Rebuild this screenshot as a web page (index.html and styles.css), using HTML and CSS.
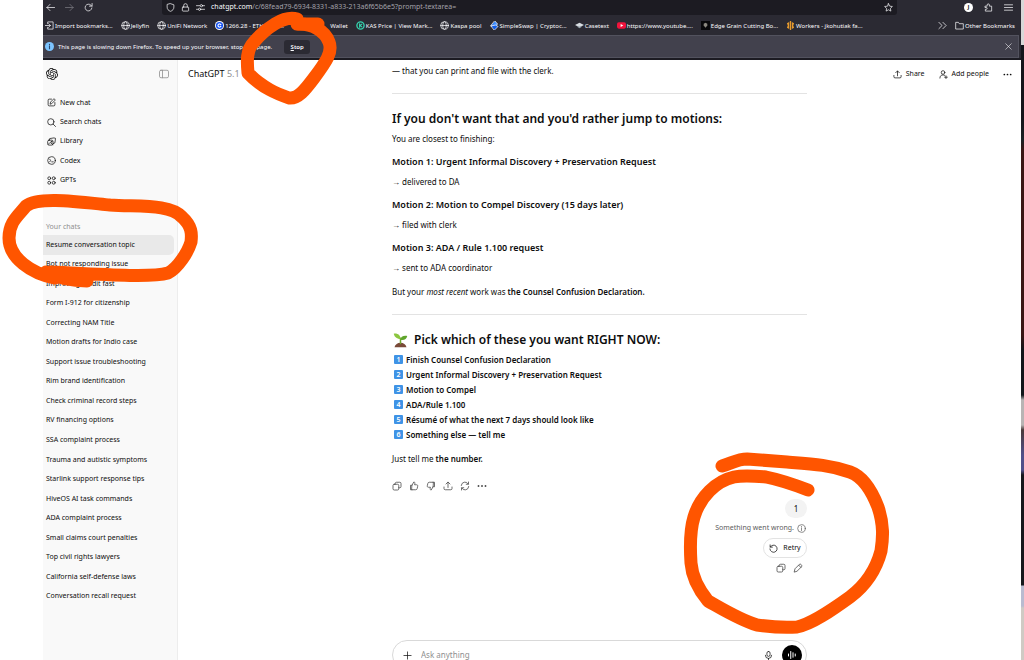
FILE: index.html
```html
<!DOCTYPE html>
<html lang="en">
<head>
<meta charset="utf-8">
<title>ChatGPT</title>
<link rel="stylesheet" href="styles.css">
</head>
<body>
<svg class="defs" aria-hidden="true">
  <symbol id="globe" viewBox="0 0 20 20"><circle cx="10" cy="10" r="8.5"/><ellipse cx="10" cy="10" rx="4" ry="8.5"/><path d="M1.5 10h17"/></symbol>
  <symbol id="copy" viewBox="0 0 20 20"><rect x="2" y="6.500" width="11.500" height="11.500" rx="2.500"/><path d="M6.500 6.500V5A2.500 2.500 0 0 1 9 2.500h6.500A2.500 2.500 0 0 1 18 5v6a2.500 2.500 0 0 1-2.500 2.500h-2"/></symbol>
  <symbol id="share" viewBox="0 0 20 20"><path d="M10 13V2.500M6 6l4-4 4 4M2 12v3a2.500 2.500 0 0 0 2.500 2.500h11a2.500 2.500 0 0 0 2.500-2.500v-3"/></symbol>
  <symbol id="dots" viewBox="0 0 20 20"><g fill="currentColor" stroke="none"><circle cx="3" cy="10" r="1.900"/><circle cx="10" cy="10" r="1.900"/><circle cx="17" cy="10" r="1.900"/></g></symbol>
  <symbol id="thumb" viewBox="0 0 20 20"><path d="M6 8.500 9.500 2c1.800 0 2.600 1.200 2.200 3l-.6 2.500H15c2 0 2.800 1.200 2.400 3l-1 4.500c-.4 1.700-1.400 2.500-3 2.500H6zM6 8.500H3v9h3"/></symbol>
</svg>
<div class="desktop">
  <div class="window">
    <header class="chrome">
      <div class="urlbar">
        <div class="nav">
          <button class="ib" aria-label="Back"><svg viewBox="0 0 20 20"><path d="M19 10H2M9 3l-7 7 7 7"/></svg></button>
          <button class="ib dim" aria-label="Forward"><svg viewBox="0 0 20 20"><path d="M1 10h17M11 3l7 7-7 7"/></svg></button>
          <button class="ib" aria-label="Reload"><svg viewBox="0 0 20 20"><path d="M17.500 11a7.500 7.500 0 1 1-2-6l2 2M18 1v6h-6"/></svg></button>
        </div>
        <div class="address">
          <svg class="i" viewBox="0 0 20 20"><path d="M10 1.500 17.500 4v5c0 5-3 8-7.500 9.500C5.500 17 2.500 14 2.500 9V4z"/></svg>
          <svg class="i" viewBox="0 0 20 20"><rect x="3" y="9" width="14" height="9" rx="1.500"/><path d="M6 9V5.500a4 4 0 0 1 8 0V9"/></svg>
          <svg class="i" viewBox="0 0 20 20"><path d="M1 6h7M15 6h4M1 14h4M12 14h7"/><circle cx="12" cy="6" r="2.500"/><circle cx="8" cy="14" r="2.500"/></svg>
          <span class="url"><b>chatgpt.com</b>/c/68fead79-6934-8331-a833-213a6f65b6e5?prompt-textarea=</span>
          <svg class="i star" viewBox="0 0 20 20"><path d="m10 1.500 2.600 5.500 6 .8-4.400 4.200 1.100 6-5.300-3-5.300 3 1.100-6L1.400 7.800l6-.8z"/></svg>
        </div>
        <div class="tools">
          <span class="avatar">J</span>
          <svg class="i" viewBox="0 0 20 20"><path d="M3 7h4V4.500a2.500 2.500 0 0 1 5 0V7h5v11H3v-4h2a2 2 0 0 0 0-4H3z"/></svg>
          <svg class="i" viewBox="0 0 20 20"><path d="M1 4h18M1 10h18M1 16h18"/></svg>
        </div>
      </div>
      <nav class="bookmarks">
        <a href="#"><svg class="i" viewBox="0 0 20 20"><path d="M6 6V2h12v16H6v-4M0 10h12M8 6l4 4-4 4"/></svg>Import bookmarks...</a>
        <a href="#"><svg class="i"><use href="#globe"/></svg>Jellyfin</a>
        <a href="#"><svg class="i"><use href="#globe"/></svg>UniFi Network</a>
        <a href="#" class="b-eth"><svg class="i" viewBox="0 0 20 20"><circle cx="10" cy="10" r="10" fill="#fff" stroke="none"/><circle cx="10" cy="10" r="8" fill="#1652f0" stroke="none"/><path d="M13 8a3.500 3.500 0 1 0 0 4" stroke="#fff" stroke-width="2.500"/></svg>1266.28 - ETH-USD ...</a>
        <a href="#">Wallet</a>
        <a href="#"><svg class="i" viewBox="0 0 20 20"><circle cx="10" cy="10" r="8" stroke="#35d3ae" stroke-width="3"/><path d="M8 6v8M13 7l-4 3 4 3" stroke="#35d3ae" stroke-width="2.500"/></svg>KAS Price | View Mark...</a>
        <a href="#"><svg class="i"><use href="#globe"/></svg>Kaspa pool</a>
        <a href="#"><svg class="i" viewBox="0 0 20 20" stroke="none"><path d="M11 0l6 7-7 5-8-1z" fill="#3c8cff"/><path d="M3 11l9-2 6 3-8 8z" fill="#0d5be8"/></svg>SimpleSwap | Cryptoc...</a>
        <a href="#"><svg class="i" viewBox="0 0 20 20"><path d="M0 9l10-5 10 5-10 5z" fill="#d8dde2" stroke="none"/><path d="M4 12l6 4 6-4z" fill="#9aa6b0" stroke="none"/></svg>Casetext</a>
        <a href="#"><svg class="i" viewBox="0 0 20 20"><rect y="3" width="20" height="14" rx="4" fill="#f1133c" stroke="none"/><path d="M8 6.500v7l6-3.500z" fill="#fff" stroke="none"/></svg>https://www.youtube....</a>
        <a href="#"><svg class="i" viewBox="0 0 20 20"><path d="M0 0h20v20H0z" fill="#08080a" stroke="none"/><path d="M6 6l4-2 4 2v4l-4 5-4-5z" fill="#8a877f" stroke="none"/></svg>Edge Grain Cutting Bo...</a>
        <a href="#"><svg class="i" viewBox="0 0 20 20"><path d="M7 2v16l-5-3 2-5-2-5zM8.500 0h3v20h-3zM13 2l5 3-2 5 2 5-5 3z" fill="#e69a2e" stroke="none"/></svg>Workers - jkohutiak fa...</a>
        <button class="ib more" aria-label="More bookmarks"><svg viewBox="0 0 20 20"><path d="M2 3l7 7-7 7M11 3l7 7-7 7"/></svg></button>
        <a href="#"><svg class="i" viewBox="0 0 20 20"><path d="M1.500 17V3h6l2 3h9v11z"/></svg>Other Bookmarks</a>
      </nav>
      <div class="notice" role="alert">
        <svg class="i info" viewBox="0 0 20 20"><circle cx="10" cy="10" r="10" fill="#7cc4ff" stroke="none"/><path d="M10 9v6M10 5v1" stroke="#2b4a70" stroke-width="2.500"/></svg>
        <span>This page is slowing down Firefox. To speed up your browser, stop this page.</span>
        <button class="stop"><u>S</u>top</button>
        <button class="ib close" aria-label="Close"><svg viewBox="0 0 20 20"><path d="M2 2l16 16M18 2 2 18"/></svg></button>
      </div>
    </header>
    <div class="app">
      <aside class="sidebar">
        <div class="side-head">
          <svg class="logo" viewBox="0 0 24 24"><path d="M22.280 9.820a5.980 5.980 0 0 0-.520-4.910 6.050 6.050 0 0 0-6.510-2.900A6.070 6.070 0 0 0 4.980 4.180a5.980 5.980 0 0 0-4 2.900 6.050 6.050 0 0 0 .740 7.100 5.980 5.980 0 0 0 .510 4.910 6.050 6.050 0 0 0 6.510 2.900A5.980 5.980 0 0 0 13.260 24a6.060 6.060 0 0 0 5.770-4.210 5.990 5.990 0 0 0 4-2.900 6.060 6.060 0 0 0-.750-7.070zm-9.020 12.610a4.480 4.480 0 0 1-2.880-1.040l4.920-2.840a.8.8 0 0 0 .390-.680v-6.740l2.020 1.170v5.620a4.500 4.500 0 0 1-4.450 4.510zM3.600 18.300a4.470 4.470 0 0 1-.530-3.010l4.920 2.850a.77.77 0 0 0 .780 0l5.840-3.370v2.330L9.740 19.950a4.500 4.500 0 0 1-6.140-1.650zM2.340 7.900a4.480 4.480 0 0 1 2.370-1.980v5.680a.77.77 0 0 0 .390.680l5.810 3.350-2.020 1.170-4.830-2.790A4.500 4.500 0 0 1 2.340 7.870zm16.600 3.850-5.840-3.380 2.020-1.160 4.830 2.790a4.490 4.490 0 0 1-.680 8.100v-5.680a.79.79 0 0 0-.330-.670zm2.010-3.020-4.910-2.880a.78.78 0 0 0-.790 0L9.410 9.230V6.900l4.900-2.830a4.500 4.500 0 0 1 6.640 4.660zM8.310 12.860l-2.020-1.160V6.070a4.500 4.500 0 0 1 7.380-3.450L8.840 5.460a.8.8 0 0 0-.390.680zm1.100-2.360 2.600-1.500 2.600 1.500v3l-2.600 1.500-2.600-1.500z"/></svg>
          <button class="ib toggle" aria-label="Close sidebar"><svg viewBox="0 0 20 20"><rect x="1" y="2.500" width="18" height="15" rx="3"/><path d="M7 2.500v15"/></svg></button>
        </div>
        <nav class="menu">
          <a href="#"><svg class="i" viewBox="0 0 20 20"><path d="M10 2.500H5A2.500 2.500 0 0 0 2.500 5v10A2.500 2.500 0 0 0 5 17.500h10a2.500 2.500 0 0 0 2.500-2.500v-5M7 13l1-4 7.500-7.500 3 3L11 12z"/></svg>New chat</a>
          <a href="#"><svg class="i" viewBox="0 0 20 20"><circle cx="8.500" cy="8.500" r="7"/><path d="m13.500 13.500 5.500 5.500"/></svg>Search chats</a>
          <a href="#"><svg class="i" viewBox="0 0 20 20"><rect x="1.500" y="7" width="12" height="11" rx="3"/><path d="M5 7l1-3.500L15.500 2l3.500 1-1.500 10-4 2M3 16l4-4 6 5"/><circle cx="10" cy="10.500" r="1"/></svg>Library</a>
          <a href="#"><svg class="i" viewBox="0 0 20 20"><circle cx="10" cy="10" r="8.500"/><path d="m6 7 2 3-2 3M10.500 13H14"/></svg>Codex</a>
          <a href="#"><svg class="i" viewBox="0 0 20 20"><circle cx="5" cy="5" r="3.200"/><circle cx="15" cy="5" r="3.200"/><circle cx="5" cy="15" r="3.200"/><circle cx="15" cy="15" r="3.200"/></svg>GPTs</a>
        </nav>
        <h2 class="side-title">Your chats</h2>
        <nav class="chats">
          <a href="#" class="active">Resume conversation topic</a>
          <a href="#">Bot not responding issue</a>
          <a href="#">Improving credit fast</a>
          <a href="#">Form I-912 for citizenship</a>
          <a href="#">Correcting NAM Title</a>
          <a href="#">Motion drafts for Indio case</a>
          <a href="#">Support issue troubleshooting</a>
          <a href="#">Rim brand identification</a>
          <a href="#">Check criminal record steps</a>
          <a href="#">RV financing options</a>
          <a href="#">SSA complaint process</a>
          <a href="#">Trauma and autistic symptoms</a>
          <a href="#">Starlink support response tips</a>
          <a href="#">HiveOS AI task commands</a>
          <a href="#">ADA complaint process</a>
          <a href="#">Small claims court penalties</a>
          <a href="#">Top civil rights lawyers</a>
          <a href="#">California self-defense laws</a>
          <a href="#">Conversation recall request</a>
        </nav>
      </aside>
      <main class="main">
        <div class="topbar">
          <button class="model">ChatGPT <span>5.1</span></button>
          <div class="top-actions">
            <button><svg class="i"><use href="#share"/></svg>Share</button>
            <button><svg class="i" viewBox="0 0 20 20"><circle cx="9" cy="5.500" r="4"/><path d="M2 18c0-5 3-7 7-7 1.500 0 3 .3 4 1M15.500 13v6M12.500 16h6"/></svg>Add people</button>
            <button aria-label="More"><svg class="i"><use href="#dots"/></svg></button>
          </div>
        </div>
        <div class="thread">
          <article class="answer">
            <p>— that you can print and file with the clerk.</p>
            <hr>
            <h2>If you don't want that and you'd rather jump to motions:</h2>
            <p class="lead">You are closest to finishing:</p>
            <h3>Motion 1: Urgent Informal Discovery + Preservation Request</h3>
            <p>→ delivered to DA</p>
            <h3>Motion 2: Motion to Compel Discovery (15 days later)</h3>
            <p>→ filed with clerk</p>
            <h3>Motion 3: ADA / Rule 1.100 request</h3>
            <p>→ sent to ADA coordinator</p>
            <p class="note">But your <em>most recent</em> work was <strong>the Counsel Confusion Declaration.</strong></p>
            <hr>
            <h2 class="pick"><svg class="seedling" viewBox="0 0 20 20"><path d="M2 19c1-4 4-6 8-6s7 2 8 6z" fill="#7a4a38"/><path d="M10 14V7" stroke="#6fa92f" stroke-width="2"/><path d="M10 8C6 8 2 6 1 1c5-1 9 2 9 7z" fill="#8cc63f"/><path d="M10 9c0-4 4-6 9-5-1 4-4 6-9 5z" fill="#5fa52c"/></svg>Pick which of these you want RIGHT NOW:</h2>
            <ul class="options">
              <li><span class="key">1</span>Finish Counsel Confusion Declaration</li>
              <li><span class="key">2</span>Urgent Informal Discovery + Preservation Request</li>
              <li><span class="key">3</span>Motion to Compel</li>
              <li><span class="key">4</span>ADA/Rule 1.100</li>
              <li><span class="key">5</span>Résumé of what the next 7 days should look like</li>
              <li><span class="key">6</span>Something else — tell me</li>
            </ul>
            <p>Just tell me <strong>the number.</strong></p>
            <div class="actions">
              <button class="ib" aria-label="Copy"><svg><use href="#copy"/></svg></button>
              <button class="ib" aria-label="Good response"><svg><use href="#thumb"/></svg></button>
              <button class="ib flip" aria-label="Bad response"><svg><use href="#thumb"/></svg></button>
              <button class="ib" aria-label="Share"><svg><use href="#share"/></svg></button>
              <button class="ib" aria-label="Regenerate"><svg viewBox="0 0 20 20"><path d="M2.500 9A7.500 7.500 0 0 1 16.500 6M17 2v4.500h-4.500M17.500 11a7.500 7.500 0 0 1-14 3M3 18v-4.500h4.500"/></svg></button>
              <button class="ib" aria-label="More actions"><svg><use href="#dots"/></svg></button>
            </div>
          </article>
          <section class="prompt">
            <div class="bubble">1</div>
            <div class="error">Something went wrong. <svg class="i" viewBox="0 0 20 20"><circle cx="10" cy="10" r="8.500"/><path d="M10 9v5.500M10 5.500v1"/></svg></div>
            <button class="retry"><svg class="i" viewBox="0 0 20 20"><path d="M3 6.500A8 8 0 1 1 2 11M2.500 2v5h5"/></svg>Retry</button>
            <div class="prompt-actions">
              <button class="ib" aria-label="Copy message"><svg><use href="#copy"/></svg></button>
              <button class="ib" aria-label="Edit message"><svg viewBox="0 0 20 20"><path d="m2.500 17.500 1.500-6 9-9c2-1.500 5.500 2 4.500 4.500l-9 9zM11.500 4.500l4.500 4.500"/></svg></button>
            </div>
          </section>
          <form class="composer">
            <button type="button" class="ib" aria-label="Add"><svg viewBox="0 0 20 20"><path d="M10 2v16M2 10h16"/></svg></button>
            <input type="text" placeholder="Ask anything" aria-label="Ask anything">
            <button type="button" class="ib" aria-label="Dictate"><svg viewBox="0 0 20 20"><rect x="6.500" y="1" width="7" height="11" rx="3.500"/><path d="M3 9.500a7 7 0 0 0 14 0M10 16.500V20"/></svg></button>
            <button type="button" class="voice" aria-label="Voice mode"><svg viewBox="0 0 20 20"><path d="M3 8v4M7.500 3v14M12 5.500v9M16.500 8v4"/></svg></button>
          </form>
        </div>
      </main>
    </div>
  </div>
  <div class="behind"></div>
</div>
<svg class="ink" viewBox="0 0 1024 660" aria-hidden="true">
  <path d="M297 19C284 15 266 28 254 42C246 50 247 62 248 73C262 88 278 94 289 98C298 99 305 90 314 78C326 62 333 52 329 42C325 31 312 23 297 24Z"/>
  <path d="M298 24h20"/>
  <path d="M46 272C60 279 75 281 87 281M55 278C32 274 9 258 9 238C9 222 18 216 26 206C38 196 80 202 110 205C140 207 170 204 182 217C192 226 192 234 191 242C188 252 178 268 168 273C150 278 100 274 50 272"/>
  <path d="M722 466C732 463 738 459 747 459L787 462C812 464 830 465 850 472C864 477 873 494 878 507C884 525 883 538 881 551C876 570 866 585 850 597C832 610 812 624 797 627C783 628 771 627 757 625C740 620 724 610 708 601C699 590 692 576 691 563C690 548 690 530 694 517C700 497 716 481 734 477C744 475 754 476 766 477C781 480 795 485 808 490"/>
</svg>
</body>
</html>
```
FILE: styles.css
```css
* { box-sizing: border-box; }
body {
  margin: 0;
  background: #fff;
  color: #0d0d0d;
  font: 7px/12px "Noto Sans", "Open Sans", sans-serif;
  overflow: hidden;
}
svg { fill: none; stroke: currentColor; stroke-width: 1.6; stroke-linecap: round; stroke-linejoin: round; }
.defs { position: absolute; width: 0; height: 0; }
button, input { font: inherit; color: inherit; background: none; border: 0; padding: 0; }
a { color: inherit; text-decoration: none; white-space: nowrap; }
h2, h3, p, ul { margin: 0; padding: 0; }
.i, .ib svg { width: 9px; height: 9px; flex: none; display: block; }
.ib { display: flex; flex: none; }

.desktop { display: grid; grid-template-columns: 43px minmax(0, 1fr) 3px; height: 100vh; }
.window { grid-column: 2; display: flex; flex-direction: column; min-height: 0; }
.behind {
  background: linear-gradient(#d8d8d8 0 45px, #14161b 45px 120px, #1a2124 140px, #3a1614 150px 335px, #11161a 350px 395px, #b8b4b4 400px 425px, #4a3a3a 430px, #50508a 455px 470px, #15181c 475px 585px, #b9bbd0 586px 606px, #cfcac4 608px);
}

.chrome { background: #2b2a33; color: #fbfbfe; font-size: 6px; border-bottom: 2px solid #1c1b22; }
.urlbar { display: flex; align-items: center; height: 16px; padding: 0 8px 2px 3px; }
.nav { display: flex; gap: 10px; width: 116px; }
.dim { opacity: .4; }
.address { flex: 1; display: flex; align-items: center; gap: 6px; height: 15px; padding: 0 4px; background: #1c1b22; border-radius: 0 0 3px 3px; }
.url { font-size: 7px; color: #a3a2aa; }
.url b { color: #fbfbfe; font-weight: 400; }
.star { margin-left: auto; }
.tools { display: flex; align-items: center; gap: 11px; margin-left: 67px; }
.avatar { width: 9px; height: 9px; border-radius: 50%; background: #fff; color: #222; font-weight: 700; line-height: 9px; text-align: center; }
.bookmarks { display: flex; align-items: center; gap: 8px; height: 19px; padding: 0 6px 0 2px; }
.bookmarks a { display: flex; align-items: center; gap: 1px; }
.b-eth { width: 107px; }
.more { margin-left: auto; }
.notice { display: flex; align-items: center; height: 23px; padding: 0 6px 0 2px; margin-right: 2px; background: #42414d; border: 1px solid #52525e; border-left: 0; }
.info { margin-right: 4px; }
.stop { margin-left: 12px; width: 26px; height: 14px; border-radius: 3px; background: #2b2a33; font-weight: 600; }
.close { margin-left: auto; }
.close svg { width: 7px; height: 7px; }

.app { flex: 1; display: flex; min-height: 0; }
.sidebar { width: 135px; flex: none; display: flex; flex-direction: column; background: #f9f9f9; border-right: 1px solid #ededed; padding-bottom: 54px; }
.side-head { display: flex; justify-content: space-between; align-items: center; height: 28px; padding: 0 8px 0 3px; margin-bottom: 5px; }
.logo { width: 12px; height: 12px; stroke: none; fill: currentColor; }
.toggle { color: #8f8f8f; }
.toggle svg { width: 10px; height: 10px; }
.menu { display: grid; grid-template-rows: repeat(5, 1fr); height: 97px; margin-bottom: 29px; }
.menu a { display: flex; align-items: center; gap: 4px; padding-left: 4px; }
.side-title { font-size: 7px; font-weight: 400; line-height: 16px; color: #8f8f8f; padding-left: 3px; }
.chats { flex: 1; display: grid; grid-auto-rows: 1fr; margin-right: 3px; }
.chats a { display: flex; align-items: center; padding-left: 3px; }
.active { background: #e9e9e9; border-radius: 0 5px 5px 0; }

.main { flex: 1; min-width: 0; position: relative; }
.topbar { position: absolute; inset: 0 0 auto 0; display: flex; justify-content: space-between; align-items: center; height: 28px; padding: 0 9px 0 10px; }
.model { font-size: 9px; }
.model span { color: #8f8f8f; }
.top-actions { display: flex; gap: 14px; }
.top-actions button { display: flex; align-items: center; gap: 4px; }
.thread { max-width: 415px; margin: 0 auto; padding-top: 3px; }
.answer { font-size: 8px; line-height: 16px; }
.answer hr { border: 0; border-top: 1px solid #e3e3e3; margin: 14px 0; }
.answer h2 { font-size: 12px; line-height: 22px; font-weight: 600; }
.answer h3 { font-size: 9px; line-height: 16px; font-weight: 600; margin: 7px 0 4px; }
.answer strong { font-weight: 600; }
.answer .lead { margin-top: 1px; }
.answer .note { margin-top: 8px; }
.pick { display: flex; align-items: center; }
.seedling { width: 15px; height: 15px; margin: 0 6px 0 1px; stroke: none; }
.options { list-style: none; font-weight: 600; line-height: 15px; margin: 1px 0 9px; }
.options li { display: flex; align-items: center; }
.key { width: 9px; height: 9px; margin: 0 3px 0 2px; border-radius: 1px; background: #3f93e6; color: #fff; font-size: 7px; line-height: 9px; text-align: center; }
.actions { display: flex; gap: 7px; margin-top: 14px; color: #4a4a4a; }
.actions svg, .prompt-actions svg { width: 10px; height: 10px; }
.flip { transform: rotate(180deg); }
.prompt { display: flex; flex-direction: column; align-items: flex-end; margin-top: 8px; }
.bubble { width: 22px; font-size: 8px; line-height: 19px; border-radius: 10px; background: #f3f3f3; text-align: center; }
.error { display: flex; align-items: center; gap: 3px; line-height: 20px; color: #5d5d5d; padding-right: 1px; }
.retry { display: flex; align-items: center; justify-content: center; gap: 5px; width: 44px; height: 20px; border: 1px solid #e3e3e3; border-radius: 10px; }
.prompt-actions { display: flex; gap: 7px; margin-top: 5px; padding-right: 4px; color: #4a4a4a; }
.composer { display: flex; align-items: center; gap: 9px; height: 30px; margin-top: 67px; padding: 0 4px 0 10px; border: 1px solid #d9d9d9; border-radius: 15px; }
.composer input { flex: 1; min-width: 0; outline: 0; font-size: 8px; }
.composer input::placeholder { color: #8f8f8f; opacity: 1; }
.voice { width: 20px; height: 20px; border-radius: 50%; background: #000; color: #fff; display: grid; place-items: center; }
.voice svg { width: 10px; height: 10px; stroke-width: 2; }

.ink { position: absolute; inset: 0 auto auto 0; width: 1024px; height: 660px; pointer-events: none; stroke: #ff5500; stroke-width: 13; }
```
